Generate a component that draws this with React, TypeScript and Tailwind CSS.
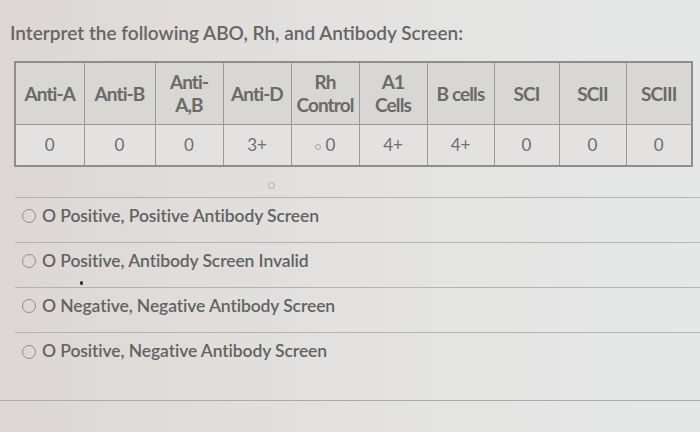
const headers = [
  { label: ['Anti-A'], w: 'w-[69px]' },
  { label: ['Anti-B'], w: 'w-[71px]' },
  { label: ['Anti-', 'A,B'], w: 'w-[68px]' },
  { label: ['Anti-D'], w: 'w-[68px]' },
  { label: ['Rh', 'Control'], w: 'w-[68px]' },
  { label: ['A1', 'Cells'], w: 'w-[68px]' },
  { label: ['B cells'], w: 'w-[67px]' },
  { label: ['SCI'], w: 'w-[65px]' },
  { label: ['SCII'], w: 'w-[67px]' },
  { label: ['SCIII'], w: 'w-[66px]' },
];

const results = ['0', '0', '0', '3+', '0', '4+', '4+', '0', '0', '0'];

const options = [
  'O Positive, Positive Antibody Screen',
  'O Positive, Antibody Screen Invalid',
  'O Negative, Negative Antibody Screen',
  'O Positive, Negative Antibody Screen',
];

export default function App() {
  return (
    <div
      className="relative w-[700px] h-[432px] overflow-hidden bg-linear-to-r from-[#dcd7d4] via-[#e3e2e0] to-[#e6e8e8] text-[#5f5f5f]"
      style={{ fontFamily: 'Lato, "Open Sans", sans-serif' }}
    >
      {/* Question */}
      <h1 className="pt-[22px] pl-[10px] text-[19px] leading-[22px] font-semibold text-[#666]">
        Interpret the following ABO, Rh, and Antibody Screen:
      </h1>

      {/* Results table */}
      <table className="mt-[17px] ml-[14px] border-collapse border-2 border-[#8f8e8c] text-[19px] font-bold tracking-[-0.9px] text-[#6a6a6a]">
        <thead>
          <tr className="h-[62px] bg-[#d9d7d4]">
            {headers.map((h, i) => (
              <th key={i} className={`${h.w} border border-[#9a9997] p-0 text-center align-middle font-bold leading-[23px]`}>
                {h.label.map((l) => (
                  <div key={l} className="whitespace-nowrap">{l}</div>
                ))}
              </th>
            ))}
          </tr>
        </thead>
        <tbody>
          <tr className="h-[42px] bg-[#e3e2e0]">
            {results.map((r, i) => (
              <td key={i} className="border border-[#9a9997] p-0 text-center align-middle text-[17px] font-normal tracking-normal text-[#6e6e6e]">
                {i === 4 && <span className="mr-[5px] inline-block h-[6px] w-[6px] rounded-full border border-[#b0a890] align-middle" />}
                {r}
              </td>
            ))}
          </tr>
        </tbody>
      </table>

      {/* stray marker */}
      <span className="absolute left-[268px] top-[182px] h-[7px] w-[7px] rounded-full border border-[#b5ac94]" />

      {/* Answer options */}
      <div className="mt-[30px] ml-[15px] border-t border-[#b3b3b1]">
        {options.map((o, i) => (
          <label
            key={o}
            className={`flex h-[45px] items-center gap-[6px] pl-[7px] pb-[8px] ${i < options.length - 1 ? 'border-b border-[#b3b3b1]' : ''}`}
          >
            <span className="h-[14px] w-[14px] shrink-0 rounded-full border-[1.5px] border-[#8e8e8e]" />
            <span className="text-[17.5px] font-semibold tracking-[-0.1px] text-[#636363]">{o}</span>
          </label>
        ))}
      </div>

      <span className="absolute left-[80px] top-[281px] h-[4px] w-[3px] rounded-full bg-[#3a2a2a]" />

      <div className="mt-[22px] border-t border-[#a9aaaa]" />
    </div>
  );
}
